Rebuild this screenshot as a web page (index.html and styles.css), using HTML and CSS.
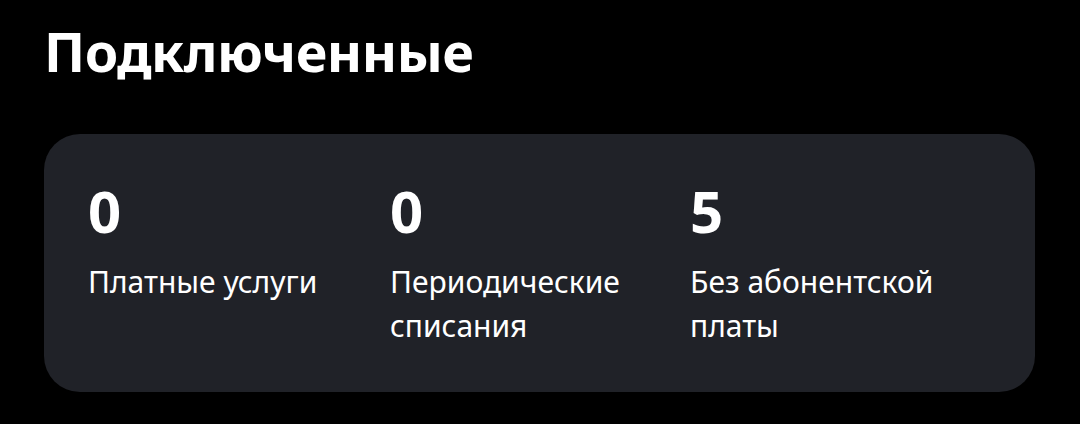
FILE: index.html
```html
<!DOCTYPE html>
<html lang="ru">
<head>
<meta charset="utf-8">
<link rel="stylesheet" href="styles.css">
</head>
<body>
<main class="page">
  <h1 class="title">Подключенные</h1>
  <section class="card">
    <div class="stat">
      <div class="num">0</div>
      <div class="label">Платные услуги</div>
    </div>
    <div class="stat">
      <div class="num">0</div>
      <div class="label">Периодические списания</div>
    </div>
    <div class="stat">
      <div class="num">5</div>
      <div class="label">Без абонентской платы</div>
    </div>
  </section>
</main>
</body>
</html>
```
FILE: styles.css
```css
html, body {
  margin: 0;
  padding: 0;
  background: #000;
}
body {
  font-family: "Noto Sans", "Open Sans", sans-serif;
  color: #fff;
  width: 1080px;
  height: 424px;
  overflow: hidden;
}
.page {
  padding: 15px 45px 0 44px;
}
.title {
  margin: 0;
  font-size: 54px;
  font-weight: 700;
  line-height: 72px;
  letter-spacing: -0.5px;
}
.card {
  margin-top: 47px;
  background: #202228;
  border-radius: 36px;
  height: 258px;
  box-sizing: border-box;
  padding: 37px 44px 0 44px;
  display: grid;
  grid-template-columns: 302px 300px 300px;
}
.num {
  font-size: 58px;
  font-weight: 700;
  line-height: 80px;
}
.label {
  margin-top: 9px;
  font-size: 30px;
  line-height: 44px;
  max-width: 250px;
}
```
